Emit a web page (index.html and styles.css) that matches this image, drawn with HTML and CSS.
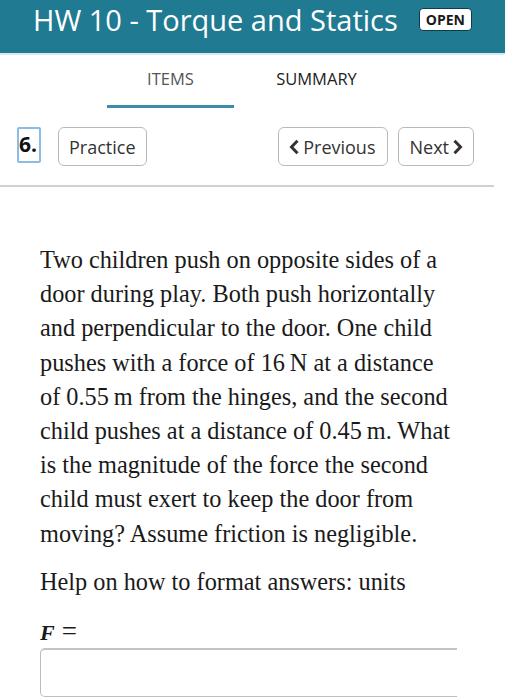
FILE: index.html
```html
<!DOCTYPE html>
<html>
<head>
<meta charset="utf-8">
<link rel="stylesheet" href="styles.css">
</head>
<body>
<header class="topbar">
  <h1 class="title">HW 10 - Torque and Statics</h1>
  <span class="badge">OPEN</span>
</header>
<nav class="tabs">
  <div class="tab tab-active">ITEMS</div>
  <div class="tab">SUMMARY</div>
</nav>
<div class="navrow">
  <div class="navleft">
    <span class="qnum">6.</span>
    <button class="btn">Practice</button>
  </div>
  <div class="navright">
    <button class="btn btn-prev"><svg class="chev" viewBox="0 0 12 16" width="12" height="16"><path d="M9.5 1.8 L3.5 8 L9.5 14.2" fill="none" stroke="#333" stroke-width="3"/></svg>Previous</button>
    <button class="btn btn-next">Next<svg class="chev" viewBox="0 0 12 16" width="12" height="16"><path d="M2.5 1.8 L8.5 8 L2.5 14.2" fill="none" stroke="#333" stroke-width="3"/></svg></button>
  </div>
</div>
<hr class="divider">
<main class="question">
  <p class="prompt">Two children push on opposite sides of a<br>door during play. Both push horizontally<br>and perpendicular to the door. One child<br>pushes with a force of <span class="num">16</span>&#8201;<span class="num">N</span> at a distance<br>of <span class="num">0.55</span>&#8201;m from the hinges, and the second<br>child pushes at a distance of <span class="num">0.45</span>&#8201;m. What<br>is the magnitude of the force the second<br>child must exert to keep the door from<br>moving? Assume friction is negligible.</p>
  <p class="help">Help on how to format answers: units</p>
  <div class="math"><span class="var">F</span><span class="eq">=</span></div>
  <div class="inputwrap"><div class="input"></div></div>
</main>
</body>
</html>
```
FILE: styles.css
```css
html, body {
  margin: 0;
  padding: 0;
  background: #fff;
}
body {
  width: 505px;
  height: 700px;
  overflow: hidden;
  font-family: "Open Sans", "Liberation Sans", sans-serif;
}
.topbar {
  height: 53px;
  background: #1f7a92;
  border-bottom: 2px solid #d8e8ec;
  display: flex;
  align-items: flex-start;
  padding-left: 33px;
  box-sizing: content-box;
}
.title {
  margin: 0;
  font-weight: 400;
  font-size: 29px;
  color: #fff;
  letter-spacing: 0;
  line-height: normal;
}
.badge {
  margin-left: 21px;
  margin-top: 8px;
  background: #fff;
  color: #1a1a1a;
  font-weight: 700;
  font-size: 14px;
  border-radius: 4px;
  padding: 2px 6px;
  line-height: 17px;
  border: 1px solid #0e3c48;
}
.tabs {
  display: flex;
  gap: 19px;
  padding-left: 107px;
  height: 53px;
}
.tab {
  width: 127px;
  text-align: center;
  font-size: 16.5px;
  color: #222;
  padding-top: 12px;
  box-sizing: border-box;
}
.tab-active {
  color: #555;
  border-bottom: 3px solid #3c8ea4;
}
.navrow {
  display: flex;
  justify-content: space-between;
  align-items: flex-start;
  margin-top: 19px;
  padding: 0 31px 0 17px;
}
.navleft, .navright {
  display: flex;
  align-items: flex-start;
}
.navright {
  gap: 10px;
}
.qnum {
  box-sizing: border-box;
  width: 24px;
  height: 36px;
  border: 2px solid #8dbbe6;
  border-radius: 2px;
  font-weight: 700;
  font-size: 21px;
  color: #111;
  line-height: 31px;
  margin-right: 17px;
  white-space: nowrap;
}
.btn {
  font-family: "Open Sans", "Liberation Sans", sans-serif;
  font-size: 18px;
  color: #333;
  background: #fff;
  border: 1px solid #b9b9b9;
  border-radius: 6px;
  height: 39px;
  padding: 0 10px;
  display: flex;
  align-items: center;
  gap: 3px;
}
.btn-prev {
  padding: 0 11px 0 9px;
}
.btn-next {
  padding: 0 9px 0 11px;
}
.chev {
  display: block;
}
.divider {
  margin: 19px 11px 0 0;
  border: 0;
  border-top: 2px solid #d0d0d0;
}
.question {
  padding: 56px 0 0 40px;
  font-family: "Liberation Serif", "Times New Roman", serif;
  color: #1a1a1a;
}
.prompt {
  margin: 0;
  font-size: 24.3px;
  line-height: 34.2px;
}
.help {
  margin: 14px 0 0;
  font-size: 24.3px;
  line-height: 34px;
}
.math {
  margin-top: 19px;
  font-size: 22px;
  line-height: 26px;
  font-family: "Liberation Serif", serif;
  display: flex;
  align-items: baseline;
}
.var {
  font-style: italic;
  font-weight: 700;
}
.eq {
  margin-left: 7px;
  font-weight: 400;
  font-size: 27px;
  line-height: 26px;
}
.inputwrap {
  width: 417px;
  overflow: hidden;
  margin-top: 2px;
}
.input {
  width: 470px;
  height: 49px;
  border: 1px solid #bdbdbd;
  border-top: 2px solid #c4c4c4;
  border-radius: 5px;
  box-sizing: border-box;
}
```
